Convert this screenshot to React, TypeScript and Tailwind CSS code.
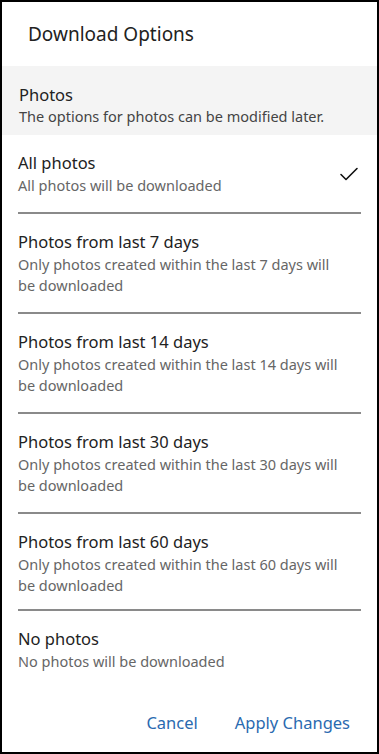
import React from "react";

const options = [
  { title: "All photos", desc: "All photos will be downloaded", selected: true },
  { title: "Photos from last 7 days", desc: "Only photos created within the last 7 days will be downloaded" },
  { title: "Photos from last 14 days", desc: "Only photos created within the last 14 days will be downloaded" },
  { title: "Photos from last 30 days", desc: "Only photos created within the last 30 days will be downloaded" },
  { title: "Photos from last 60 days", desc: "Only photos created within the last 60 days will be downloaded" },
  { title: "No photos", desc: "No photos will be downloaded" },
];

function Check() {
  return (
    <svg width="20" height="16" viewBox="0 0 20 16" fill="none" className="shrink-0">
      <path d="M2 8.5 L7 13.5 L18 2.5" stroke="#111" strokeWidth="1.6" strokeLinecap="round" strokeLinejoin="round" />
    </svg>
  );
}

export default function App() {
  return (
    <div
      className="w-[379px] h-[754px] bg-black p-[2px]"
      style={{ fontFamily: '"Noto Sans", "Open Sans", sans-serif' }}
    >
      <div className="w-full h-full bg-white flex flex-col">
        <div className="h-[64px] flex items-center pl-[26px] text-[19px] text-[#222]">
          Download Options
        </div>
        <div className="h-[69px] bg-[#f4f4f4] flex flex-col pt-[18px] px-[17px]">
          <div className="text-[16.5px] leading-[22px] text-[#222]">Photos</div>
          <div className="text-[14.5px] leading-[20px] text-[#444]">The options for photos can be modified later.</div>
        </div>
        <div className="flex flex-col">
          {options.map((o, i) => (
            <div key={i} className="px-[16px]">
              <div className={`flex items-center justify-between pt-[17px] ${i === 4 ? "pb-[13px]" : "pb-[16px]"}`}>
                <div className="flex flex-col flex-1 max-w-[330px]">
                  <div className="text-[16.5px] leading-[22px] text-[#222]">{o.title}</div>
                  <div className="text-[14.5px] leading-[21px] text-[#666] mt-[1px]">{o.desc}</div>
                </div>
                {o.selected && <div className="mr-[2px]"><Check /></div>}
              </div>
              {i < options.length - 1 && <div className="h-[2px] bg-[#8a8a8a]" />}
            </div>
          ))}
        </div>
        <div className="flex-1" />
        <div className="flex justify-end items-center gap-[37px] pr-[27px] pb-[16px] text-[16.5px] text-[#2a6ab0]">
          <span>Cancel</span>
          <span>Apply Changes</span>
        </div>
      </div>
    </div>
  );
}
